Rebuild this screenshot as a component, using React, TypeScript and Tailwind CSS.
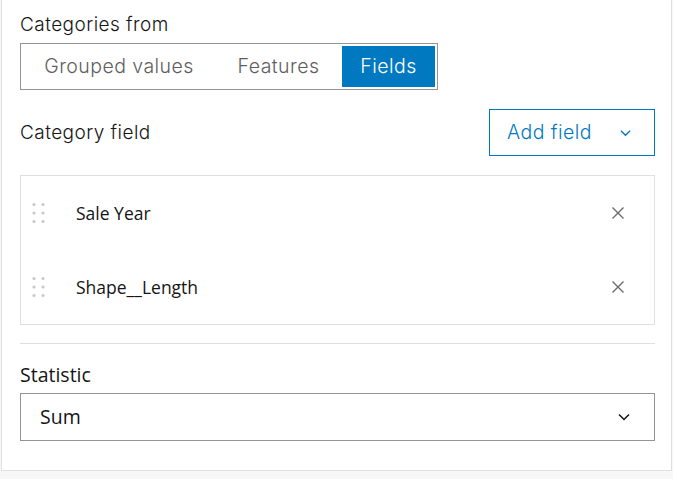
import React from "react";

const avenir = { fontFamily: "Inter, 'Open Sans', sans-serif", letterSpacing: "0.45px" };
const segoe = { fontFamily: "'Open Sans', sans-serif" };

function DragHandle() {
  return (
    <svg width="14" height="22" viewBox="0 0 14 22" className="shrink-0">
      {[0, 1, 2].map((r) =>
        [0, 1].map((c) => (
          <circle key={`${r}-${c}`} cx={2 + c * 9} cy={2.5 + r * 8.5} r="1.6" fill="#c9c9c9" />
        ))
      )}
    </svg>
  );
}

function XIcon() {
  return (
    <svg width="14" height="14" viewBox="0 0 14 14">
      <path d="M1.5 1.5 L12.5 12.5 M12.5 1.5 L1.5 12.5" stroke="#6b6b6b" strokeWidth="1.4" fill="none" />
    </svg>
  );
}

function Chevron({ color, w = 12 }: { color: string; w?: number }) {
  return (
    <svg width={w} height="8" viewBox="0 0 12 8">
      <path d="M1 1.5 L6 6.5 L11 1.5" stroke={color} strokeWidth="1.5" fill="none" />
    </svg>
  );
}

export default function App() {
  return (
    <div className="w-[673px] h-[479px] bg-[#f7f7f7] overflow-hidden">
      <div className="ml-[1px] w-[671px] h-[471px] bg-white border-l border-r border-b border-[#e0e0e0] pl-[18px] pr-[16px] pt-[13px] flex flex-col">
        <div className="text-[19px] leading-[24px] text-[#151515] font-light" style={avenir}>
          Categories from
        </div>
        <div className="mt-[6px] self-start border border-[#959595] p-[2px] flex h-[47px] font-light" style={avenir}>
          <div className="w-[192px] flex items-center justify-center text-[19.5px] text-[#5e5e5e]">Grouped values</div>
          <div className="w-[127px] flex items-center justify-center text-[19.5px] text-[#5e5e5e]">Features</div>
          <div className="w-[93px] flex items-center justify-center text-[19.5px] text-white bg-[#0079c1]">Fields</div>
        </div>
        <div className="mt-[19px] flex items-center justify-between">
          <div className="text-[19px] text-[#151515] font-light translate-y-[1px]" style={avenir}>
            Category field
          </div>
          <div
            className="w-[166px] h-[47px] border border-[#0079c1] flex items-center justify-between pl-[17px] pr-[23px] text-[19.5px] text-[#0079c1] font-light"
            style={avenir}
          >
            <span>Add field</span>
            <Chevron color="#0079c1" w={11} />
          </div>
        </div>
        <div className="mt-[19px] border border-[#dfdfdf]" style={segoe}>
          {["Sale Year", "Shape__Length"].map((t) => (
            <div key={t} className="h-[74px] flex items-center pl-[11px] pr-[29px]">
              <DragHandle />
              <span className="ml-[30px] flex-1 text-[17.5px] text-[#151515]">{t}</span>
              <XIcon />
            </div>
          ))}
        </div>
        <div className="mt-[18px] border-t border-[#dfdfdf]" />
        <div className="mt-[19px] text-[19.5px] leading-[24px] text-[#151515]" style={segoe}>
          Statistic
        </div>
        <div
          className="mt-[6px] h-[48px] border border-[#949494] flex items-center justify-between pl-[19px] pr-[24px] text-[19.5px] text-[#151515]"
          style={segoe}
        >
          <span>Sum</span>
          <Chevron color="#151515" />
        </div>
      </div>
    </div>
  );
}
